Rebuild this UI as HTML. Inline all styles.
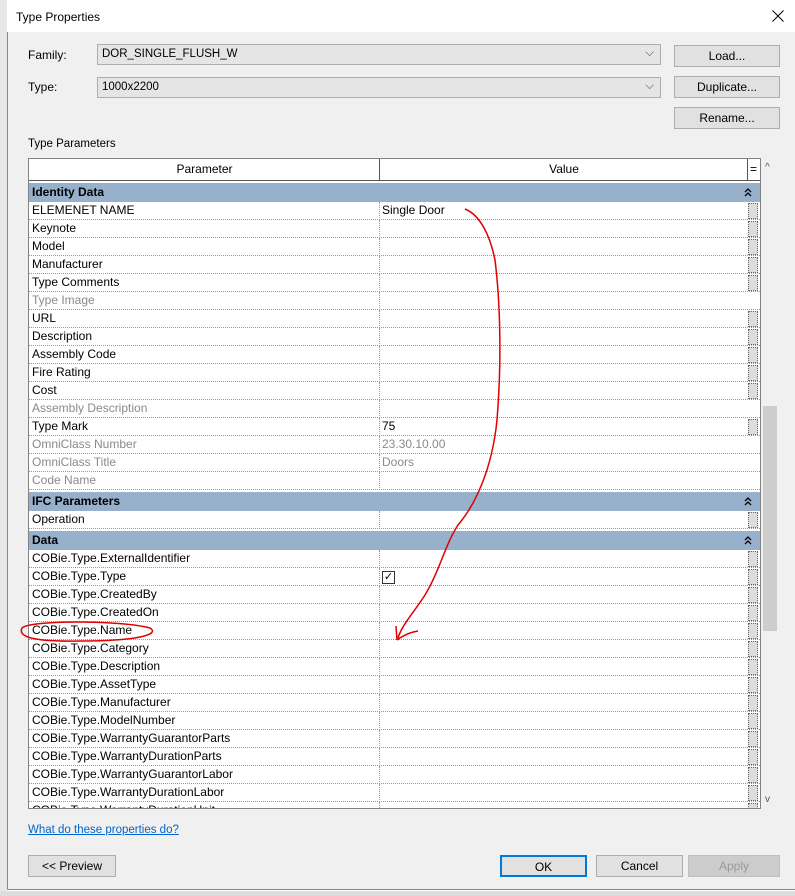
<!DOCTYPE html>
<html><head><meta charset="utf-8"><style>
*{box-sizing:border-box;margin:0;padding:0}
body{width:795px;height:896px;overflow:hidden;background:#fff;font-family:"Liberation Sans",sans-serif;font-size:12px;color:#000;position:relative}
.abs{position:absolute}
.dlg{left:7px;top:0;width:788px;height:890px;background:#f0f0f0;border-left:1px solid #888;border-bottom:1px solid #888}
.title{left:7px;top:0;width:788px;height:32px;background:#fff}
.lbl{font-size:12px}
.combo{background:#e5e5e5;border:1px solid #adadad;height:21px;padding:3px 4px;font-size:11.5px}
.btn{background:#e1e1e1;border:1px solid #adadad;height:22px;text-align:center;line-height:20px;font-size:12px}
.tbl{left:28px;top:158px;width:733px;height:651px;background:#fff;border:1px solid #828282;overflow:hidden}
.row{position:absolute;left:0;width:731px;height:18px;border-bottom:1px dotted #999;font-size:12px;line-height:17px}
.row .p{position:absolute;left:3px}
.row .v{position:absolute;left:350px;top:0;height:18px;border-left:1px dotted #999;padding-left:2px;width:369px}
.row .s{position:absolute;left:719px;top:1px;width:10px;height:16px;background:#ddd;border:1px dotted #666}
.g{color:#8a8a8a}
.hdr{position:absolute;left:0;width:731px;height:19px;background:#97b0cc;font-weight:bold;line-height:19px;padding-left:3px}
.hdr svg{position:absolute;right:8px;top:5px}
</style></head><body>
<div class="abs" style="left:0;top:0;width:7px;height:896px;background:#e8e8e8"></div>
<div class="abs dlg"></div>
<div class="abs title"></div>
<div class="abs" style="left:16px;top:10px;font-size:12px">Type Properties</div>
<svg class="abs" style="left:772px;top:10px" width="12" height="12"><path d="M0.5,0.5 L11.5,11.5 M11.5,0.5 L0.5,11.5" stroke="#000" stroke-width="1"/></svg>

<div class="abs lbl" style="left:28px;top:48px">Family:</div>
<div class="abs lbl" style="left:28px;top:80px">Type:</div>
<div class="abs combo" style="left:97px;top:44px;width:564px">DOR_SINGLE_FLUSH_W<span style="position:absolute;right:6px;top:2px;color:#555">⌵</span></div>
<div class="abs combo" style="left:97px;top:77px;width:564px">1000x2200<span style="position:absolute;right:6px;top:2px;color:#555">⌵</span></div>
<div class="abs btn" style="left:674px;top:45px;width:106px">Load...</div>
<div class="abs btn" style="left:674px;top:76px;width:106px">Duplicate...</div>
<div class="abs btn" style="left:674px;top:107px;width:106px">Rename...</div>
<div class="abs lbl" style="left:28px;top:138px;font-size:11.5px">Type Parameters</div>

<div class="abs tbl">
<div class="abs" style="left:0;top:0;width:731px;height:22px;border-bottom:1px solid #555;background:#fff">
<div class="abs" style="left:0;width:351px;text-align:center;top:3px">Parameter</div>
<div class="abs" style="left:350px;top:0;height:21px;border-left:1px solid #555;width:369px;text-align:center;padding-top:3px">Value</div>
<div class="abs" style="left:718px;top:0;height:21px;border-left:1px solid #555;padding:3px 2px">=</div>
</div>
<div class="hdr" style="top:24px">Identity Data<svg width="8" height="9"><path d="M1,4 L4,1 L7,4 M1,8 L4,5 L7,8" stroke="#000" stroke-width="1.3" fill="none"/></svg></div>
<div id="rows"></div>
</div>
<div class="abs" style="left:762px;top:160px;width:16px;height:648px;background:#f0f0f0"></div>
<div class="abs" style="left:763px;top:406px;width:14px;height:225px;background:#cdcdcd"></div>
<div class="abs" style="left:765px;top:162px;font-size:10px;color:#555">^</div>
<div class="abs" style="left:765px;top:794px;font-size:10px;color:#555">v</div>

<div class="abs" style="left:28px;top:824px;color:#0066cc;text-decoration:underline;font-size:11.5px">What do these properties do?</div>
<div class="abs btn" style="left:28px;top:855px;width:88px">&lt;&lt; Preview</div>
<div class="abs btn" style="left:500px;top:855px;width:87px;border:2px solid #0078d7">OK</div>
<div class="abs btn" style="left:596px;top:855px;width:87px">Cancel</div>
<div class="abs btn" style="left:688px;top:855px;width:92px;color:#999;background:#ccc;border-color:#bfbfbf">Apply</div>
<div class="abs" style="left:0;top:891px;width:795px;height:5px;background:#ddd"></div>

<svg class="abs" style="left:0;top:0" width="795" height="896"><g fill="none" stroke="#e00000" stroke-width="1.5">
<path d="M22,628 C30,620 120,620 150,628 C160,634 140,641 80,641 C30,642 18,636 22,628"/>
<path d="M465,209 C480,215 490,235 495,260 C500,300 502,360 497,420 C492,470 475,505 458,525 C445,545 440,570 425,595 C412,615 402,625 398,638 M397,640 C405,634 412,632 418,631 M396,626 L397,640"/>
</g></svg>

<script>
var dc='<svg width="8" height="9"><path d="M1,4 L4,1 L7,4 M1,8 L4,5 L7,8" stroke="#000" stroke-width="1.3" fill="none"/></svg>';
var rows=[["ELEMENET NAME","Single Door",1],["Keynote","",1],["Model","",1],["Manufacturer","",1],["Type Comments","",1],["Type Image","",0],["URL","",1],["Description","",1],["Assembly Code","",1],["Fire Rating","",1],["Cost","",1],["Assembly Description","",0],["Type Mark","75",1],["OmniClass Number","23.30.10.00",0],["OmniClass Title","Doors",0],["Code Name","",0]];
var h="",y=43;
function r(p,v,e,s){h+='<div class="row" style="top:'+y+'px"><span class="p'+(e?'':' g')+'">'+p+'</span><span class="v'+(e?'':' g')+'">'+v+'</span>'+(s?'<span class="s"></span>':'')+'</div>';y+=18;}
rows.forEach(function(a){r(a[0],a[1],a[2],a[2])});
y+=2;h+='<div class="hdr" style="top:'+y+'px">IFC Parameters'+dc+'</div>';y+=19;
r("Operation","",1,1);
y+=2;h+='<div class="hdr" style="top:'+y+'px">Data'+dc+'</div>';y+=19;
["ExternalIdentifier","Type","CreatedBy","CreatedOn","Name","Category","Description","AssetType","Manufacturer","ModelNumber","WarrantyGuarantorParts","WarrantyDurationParts","WarrantyGuarantorLabor","WarrantyDurationLabor","WarrantyDurationUnit"].forEach(function(n){r("COBie.Type."+n,n=="Type"?'<span style="display:inline-block;width:13px;height:13px;border:1px solid #333;margin-top:2px;text-align:center;line-height:11px;font-size:11px">✓</span>':"",1,1)});
document.getElementById("rows").innerHTML=h;
</script>
</body></html>
